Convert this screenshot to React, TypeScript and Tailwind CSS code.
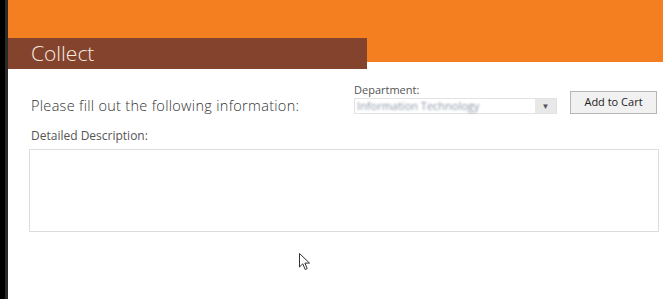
import React from "react";

const font = { fontFamily: '"Open Sans", "Noto Sans", sans-serif' };

function Cursor() {
  return (
    <svg width="12" height="18" viewBox="0 0 12 18" className="absolute left-[299px] top-[253px]">
      <path d="M0.5 0.5 L0.5 14 L3.8 10.8 L6.2 16.5 L8.2 15.6 L5.9 10.1 L10.5 10.1 Z" fill="#fff" stroke="#333" strokeWidth="1" />
    </svg>
  );
}

export default function App() {
  return (
    <div className="relative flex h-[299px] w-[663px] overflow-hidden bg-white" style={font}>
      <div className="flex h-full w-[8px] shrink-0">
        <div className="h-full w-[5px] bg-black" />
        <div className="h-full w-[3px] bg-[#2a2a2a]" />
      </div>
      <div className="flex min-w-0 flex-1 flex-col">
        <div className="h-[38px] bg-[#f47f20]" />
        <div className="flex h-[31px] items-start">
          <div className="flex h-[31px] w-[359px] items-center bg-[#84432d] pl-[23px] text-[21px] font-light text-[#f8ebe0]">
            Collect
          </div>
          <div className="h-[24px] flex-1 bg-[#f47f20]" />
        </div>
        <div className="flex items-start pl-[23px] pr-[6px] pt-[14px]">
          <div className="pt-[12px] text-[14.5px] font-light tracking-[0.3px] text-[#333]">
            Please fill out the following information:
          </div>
          <div className="ml-auto flex items-start gap-[13px]">
            <div className="flex w-[203px] flex-col">
              <div className="text-[11px] leading-[14px] text-[#555]">Department:</div>
              <div className="mt-[1px] flex h-[16px] items-center border border-[#e2e2e2] bg-white">
                <div className="flex-1 overflow-hidden whitespace-nowrap pl-[2px] text-[11px] text-[#8a96a6] blur-[1.2px]">
                  Information Technology
                </div>
                <div className="flex h-full w-[21px] items-center justify-center bg-[#e8e8e8] text-[8px] text-[#555]">▼</div>
              </div>
            </div>
            <button className="mt-[8px] h-[23px] w-[87px] border border-[#b5b5b5] bg-[#f1f1f1] text-[11px] text-[#222]">
              Add to Cart
            </button>
          </div>
        </div>
        <div className="pl-[23px] pt-[12px] text-[12px] leading-[14px] text-[#555]">Detailed Description:</div>
        <div className="ml-[21px] mr-[4px] mt-[6px] h-[83px] border border-[#dcdcdc] bg-white" />
      </div>
      <Cursor />
    </div>
  );
}
